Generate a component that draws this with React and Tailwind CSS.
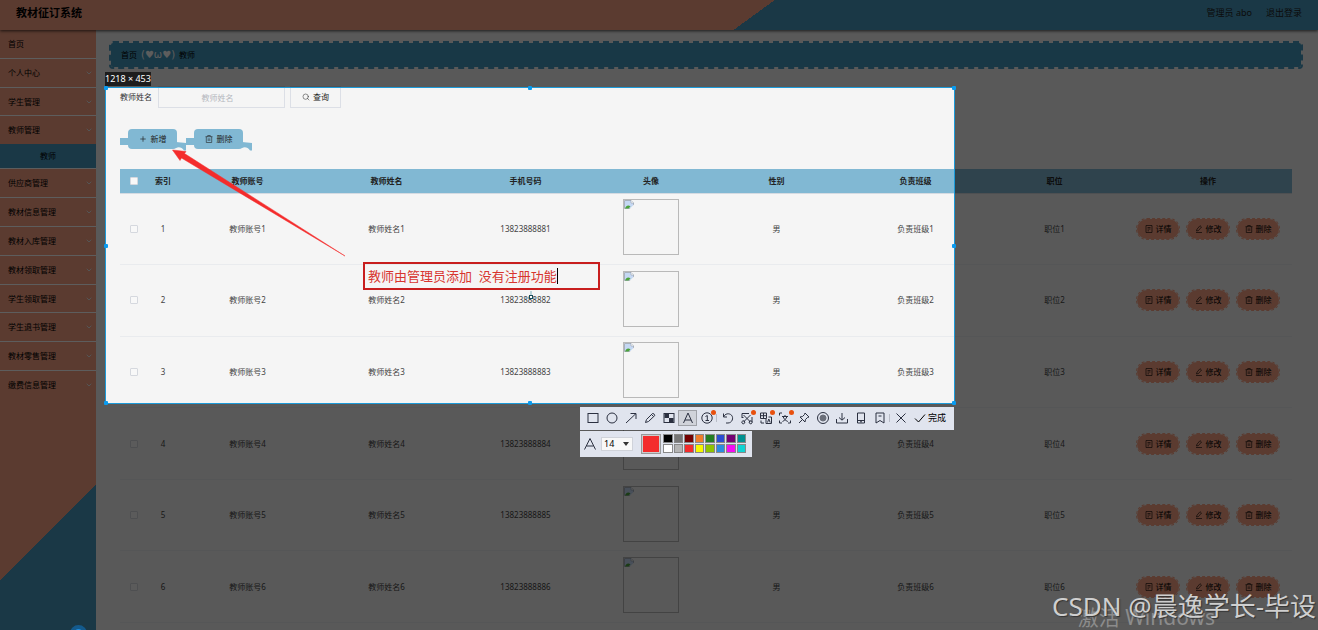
import { useState } from 'react';
import { ChevronDown, Search, Plus } from 'lucide-react';

const menus = [
  { name: '首页' },
  { name: '个人中心', arrow: true },
  { name: '学生管理', arrow: true },
  { name: '教师管理', arrow: true, child: '教师' },
  { name: '供应商管理', arrow: true },
  { name: '教材信息管理', arrow: true },
  { name: '教材入库管理', arrow: true },
  { name: '教材领取管理', arrow: true },
  { name: '学生领取管理', arrow: true },
  { name: '学生退书管理', arrow: true },
  { name: '教材零售管理', arrow: true },
  { name: '缴费信息管理', arrow: true },
];

const teachers = [1, 2, 3, 4, 5, 6].map((n) => ({
  id: n,
  account: `教师账号${n}`,
  name: `教师姓名${n}`,
  phone: `1382388888${n}`,
  sex: '男',
  grade: `负责班级${n}`,
  job: `职位${n}`,
}));

const swatches = [
  'bg-black', 'bg-[#767676]', 'bg-[#740000]', 'bg-[#ee7d2b]', 'bg-[#237d23]', 'bg-[#2a4dd0]', 'bg-[#740074]', 'bg-[#009090]',
  'bg-white', 'bg-[#b4b4b4]', 'bg-[#f42c2c]', 'bg-[#f7f700]', 'bg-[#8fc400]', 'bg-[#2b8be0]', 'bg-[#f20df2]', 'bg-[#0fd3d3]',
];

const handles = [
  'left-0 top-0', 'left-1/2 top-0', 'left-full top-0',
  'left-0 top-1/2', 'left-full top-1/2',
  'left-0 top-full', 'left-1/2 top-full', 'left-full top-full',
];

function DocIcon({ className }) {
  return (
    <svg viewBox="0 0 8 8" className={className} fill="none" stroke="currentColor" strokeWidth=".6">
      <path d="M1 .5H7V7.500H1ZM2.500 2.500H5.500M2.500 4H5.500M2.500 5.800H4" />
    </svg>
  );
}

function EditIcon({ className }) {
  return (
    <svg viewBox="0 0 8 8" className={className} fill="none" stroke="currentColor" strokeWidth=".6">
      <path d="M1.500 6L2 4.200L5 .7L6.500 2L3.500 5.500L1.500 6M1 7.500H7" />
    </svg>
  );
}

function BinIcon({ className }) {
  return (
    <svg viewBox="0 0 8 8" className={className} fill="none" stroke="currentColor" strokeWidth=".6">
      <path d="M.5 1.700H7.500M2.700 1.700V.5H5.300V1.700M1.300 1.700V7.500H6.700V1.700M3.200 3.300V6M4.800 3.300V6" />
    </svg>
  );
}

function Header() {
  return (
    <header className="relative z-10 flex h-[30px] shrink-0 items-center justify-between bg-[linear-gradient(144deg,#f8a284_57%,#489ac1_57%)] px-4 pb-1 shadow-[0_1px_3px_rgba(0,0,0,0.7)]">
      <h1 className="text-[11px] font-bold text-black">教材征订系统</h1>
      <div className="flex gap-3.5 text-[9px] text-[#222]">
        <span>管理员 abo</span>
        <a href="#logout">退出登录</a>
      </div>
    </header>
  );
}

function Sidebar() {
  return (
    <aside className="w-24 shrink-0 bg-[linear-gradient(135deg,#f8a284_389px,#489ac1_389px)]">
      <nav className="flex h-[369px] flex-col">
        {menus.map((item, i) => (
          <div key={item.name} className="contents">
            <a
              href="#menu"
              className={`flex flex-1 items-center justify-between pl-2 pr-[3px] ${i < menus.length - 1 && !item.child ? 'border-b border-white' : ''}`}
            >
              <span>{item.name}</span>
              {item.arrow && <ChevronDown className="size-2 text-[#e8e8e8]" strokeWidth={3} />}
            </a>
            {item.child && (
              <a href="#teacher" className="flex h-[25px] items-center justify-center border-b border-white bg-[#489ac1]">
                {item.child}
              </a>
            )}
          </div>
        ))}
      </nav>
    </aside>
  );
}

function RibbonButton({ icon: Icon, children }) {
  return (
    <div className="flex">
      <svg className="h-6 w-2" viewBox="0 0 8 24">
        <path d="M0 9H8V16H0Z" fill="#81b8d3" />
      </svg>
      <button className="flex h-5 w-[49px] items-center justify-center gap-1 rounded bg-[#81b8d3] text-[#222]">
        <Icon className="size-2" />
        {children}
      </button>
      <svg className="-ml-px h-6 w-2.5" viewBox="0 0 10 24">
        <path d="M0 13L10 14V21.500H8C6 18.500 3 17.500 0 19Z" fill="#81b8d3" />
      </svg>
    </div>
  );
}

function BrokenImage() {
  return (
    <div className="mx-auto size-14 border border-[#b9b9b9]">
      <svg viewBox="0 0 10 10" className="size-2.5">
        <path d="M.5 .5H7L9.500 3V8.500H.5Z" fill="#c5d8f3" stroke="#9aa3ad" strokeWidth=".8" />
        <path d="M7 .5V3H9.500" fill="#fff" stroke="#9aa3ad" strokeWidth=".6" />
        <path d="M1 8.500C2 5.500 4.500 4.500 6.500 6.500L4.500 8.500Z" fill="#4ba33b" />
        <path d="M5 9.500L10 4.500V9.500Z" fill="#f5f5f5" />
      </svg>
    </div>
  );
}

function RowAction({ icon: Icon, children }) {
  return (
    <button className="flex h-[22px] w-11 items-center justify-center gap-[3px] rounded-full border border-dashed border-[#f8a284] bg-[#f8a284] bg-clip-padding text-black">
      <Icon className="size-2" />
      {children}
    </button>
  );
}

function Checkbox({ label }) {
  return (
    <input
      type="checkbox"
      aria-label={label}
      className="mx-auto block size-2 appearance-none rounded-[1px] border border-[#d5d8de] bg-[#f8f8f8]"
    />
  );
}

function TeacherTable() {
  return (
    <table className="mt-5 h-[454px] w-full table-fixed border-collapse text-center text-[#444]">
      <colgroup>
        <col className="w-7" />
        <col className="w-[30px]" />
        <col />
        <col />
        <col />
        <col className="w-28" />
        <col />
        <col />
        <col />
        <col className="w-[168px]" />
      </colgroup>
      <thead>
        <tr className="h-6 border-b border-[#d5dbe2] bg-[#81b8d3] text-[#222]">
          <th><Checkbox label="全选" /></th>
          <th>索引</th>
          <th>教师账号</th>
          <th>教师姓名</th>
          <th>手机号码</th>
          <th>头像</th>
          <th>性别</th>
          <th>负责班级</th>
          <th>职位</th>
          <th>操作</th>
        </tr>
      </thead>
      <tbody>
        {teachers.map((t) => (
          <tr key={t.id} className="border-b border-[#e9ebee]">
            <td><Checkbox label={t.name} /></td>
            <td>{t.id}</td>
            <td>{t.account}</td>
            <td>{t.name}</td>
            <td>{t.phone}</td>
            <td className="pb-2 pt-[5px]"><BrokenImage /></td>
            <td>{t.sex}</td>
            <td>{t.grade}</td>
            <td>{t.job}</td>
            <td>
              <div className="flex justify-center gap-1.5">
                <RowAction icon={DocIcon}>详情</RowAction>
                <RowAction icon={EditIcon}>修改</RowAction>
                <RowAction icon={BinIcon}>删除</RowAction>
              </div>
            </td>
          </tr>
        ))}
      </tbody>
    </table>
  );
}

function Content() {
  return (
    <main className="min-w-0 flex-1 overflow-hidden bg-[#f5f5f5] pl-[13px] pr-[15px] pt-[11px]">
      <div className="flex h-7 items-center gap-1 rounded border-2 border-dashed border-[#489ac1] bg-[#439abf] bg-clip-padding pl-2.5 text-black">
        <a href="#home">首页</a>
        <span className="font-['DejaVu_Sans'] text-[10px] text-white">(♥ω♥)</span>
        <span>教师</span>
      </div>
      <div className="px-[11px] pt-[17px]">
        <form className="flex items-center" onSubmit={(e) => e.preventDefault()}>
          <label htmlFor="teacher" className="text-[#333]">教师姓名</label>
          <input
            id="teacher"
            placeholder="教师姓名"
            className="ml-1.5 h-[22px] w-[127px] border border-[#dcdfe6] pr-2 text-center placeholder:text-[#b4b7be]"
          />
          <button className="ml-[5px] flex h-[22px] w-[51px] items-center justify-center gap-[3px] border border-[#dcdfe6] text-[#222]">
            <Search className="size-2" strokeWidth={1.5} />
            查询
          </button>
        </form>
        <div className="mt-[21px] flex h-5">
          <RibbonButton icon={Plus}>新增</RibbonButton>
          <RibbonButton icon={BinIcon}>删除</RibbonButton>
        </div>
        <TeacherTable />
      </div>
    </main>
  );
}

// one entry per tool, drawn on a 14x14 grid
const tools = [
  { name: '矩形', art: <rect x="2" y="2.500" width="10" height="9" /> },
  { name: '椭圆', art: <circle cx="7" cy="7" r="5" /> },
  { name: '箭头', art: <path d="M2 12L12 2.500M6.500 2.500H12V8" /> },
  { name: '画笔', art: <path d="M2.500 11.500L3.500 8.500L9.500 2.500Q11 2 11.800 4.500L5.500 10.500ZM8.500 3.500L10.500 5.500" /> },
  { name: '马赛克', art: <><rect x="2" y="2.500" width="10" height="9" /><path d="M2.500 3H7V7H2.500ZM7 7H11.500V11H7Z" fill="#2b3040" stroke="none" /></> },
  { name: '文字', active: true, art: <path d="M2.500 12L7 2L11.500 12M4 9H10" /> },
  { name: '序号', dot: true, art: <><circle cx="7" cy="7" r="5.200" /><path d="M5.500 5.500L7.300 4.500V9.500M5.500 9.500H9" /></> },
  { sep: true },
  { name: '撤销', art: <path d="M2.500 2.500V6H6M2.500 6C4 2.500 8 1.800 10.500 4.200C13 7 11 12 7 12H5" /> },
  { name: '裁剪', dot: true, art: <path d="M2 6V2.500H9M12 6V11M3.500 4L10 10.500M10.500 4L4 10.500M1.500 6.500H3.500M2 12A1.500 1.500 0 1 1 4.800 11A1.500 1.500 0 0 1 2 12M9.200 11A1.500 1.500 0 1 1 12 12A1.500 1.500 0 0 1 9.200 11" /> },
  { name: '翻译', dot: true, art: <path d="M1.500 2H7.500V7.500H1.500ZM1.500 4.700H7.500M4.500 2V7.500M7 8V12.500H12.500V6H9.500M8.500 11.500L9.800 8L11.200 11.500M2 9.500V12H5" /> },
  { name: '文字识别', dot: true, art: <path d="M1.500 4.500V2H4M1.500 9.500V12H4M12.500 9.500V12H10M4 5.500H10M7 4V5.500M9 5.500C8 8 6.500 9.500 4.500 10.500M5 5.500C6 8 7.500 9.500 9.800 10.500" /> },
  { name: '钉住', art: <path d="M8 2L12 6L10.500 6.500L8.500 8.500L8 11L3 6L5.500 5.500L7.500 3.500ZM5.500 8.500L2 12" /> },
  { name: '录屏', art: <><circle cx="7" cy="7" r="5.500" /><circle cx="7" cy="7" r="3" fill="#6b6f7a" stroke="#6b6f7a" /></> },
  { name: '保存', art: <path d="M7 2V9M4 6.500L7 9.200L10 6.500M1.500 8V12H12.500V8" /> },
  { name: '手机', art: <path d="M3.500 2H10.500V12H3.500ZM3.500 9.500H10.500M6 10.800H8" /> },
  { name: '收藏', art: <path d="M3 2H11V12L7 9.500L3 12ZM5.500 5H8.500" /> },
  { sep: true },
  { name: '取消', art: <path d="M2.500 2.500L11.500 11.500M11.500 2.500L2.500 11.500" /> },
];

function CaptureTools() {
  const [size, setSize] = useState('14');
  return (
    <div className="absolute left-[580px] top-[407px] text-[#2b3040]">
      <div className="flex h-[23px] w-[374px] items-center bg-[#e0e4ee] pb-px pl-[3px]">
        {tools.map((tool, i) =>
          tool.sep ? (
            <span key={i} className="mr-px h-2 w-px bg-[#b9bdc8]" />
          ) : (
            <button
              key={i}
              aria-label={tool.name}
              className={`relative flex h-4 w-[19px] items-center justify-center ${tool.active ? 'bg-[#d0d3da] outline outline-1 -outline-offset-1 outline-[#9fa2a8]' : ''}`}
            >
              <svg viewBox="0 0 14 14" className="size-3.5" fill="none" stroke="currentColor" strokeWidth="1">
                {tool.art}
              </svg>
              {tool.dot && <i className="absolute right-0 top-0 size-[5px] rounded-full bg-[#e8500e]" />}
            </button>
          ),
        )}
        <button className="flex items-center gap-0.5 pl-1 text-[9px] text-black">
          <svg viewBox="0 0 12 12" className="size-3" fill="none" stroke="currentColor">
            <path d="M1 6.500L4.500 10L11 2.500" />
          </svg>
          完成
        </button>
      </div>
      <div className="mt-px flex h-[26px] w-[172px] items-center bg-[#e0e4ee] pb-px pl-[3px]">
        <svg viewBox="0 0 14 14" className="size-3.5" fill="none" stroke="currentColor">
          <path d="M1.500 12.500L7 1.500L12.500 12.500M3.500 9H10.500" />
        </svg>
        <div className="relative ml-1">
          <select
            aria-label="字号"
            value={size}
            onChange={(e) => setSize(e.target.value)}
            className="block h-3.5 w-8 appearance-none border border-[#d0d3da] bg-[#f8f8f8] pl-0.5 text-[9px] leading-3 text-black"
          >
            <option>12</option>
            <option>14</option>
            <option>16</option>
          </select>
          <svg viewBox="0 0 6 4" className="pointer-events-none absolute right-1 top-[5px] h-1 w-1.5">
            <path d="M0 0H6L3 4Z" fill="#333" />
          </svg>
        </div>
        <button aria-label="当前颜色" className="ml-2 size-5 border border-[#999] bg-[#f42c2c] ring-1 ring-inset ring-[#ccc]" />
        <div className="ml-0.5 grid w-[83px] grid-cols-8 gap-px">
          {swatches.map((color) => (
            <button key={color} aria-label="颜色" className={`h-[9px] border border-[#888] ${color}`} />
          ))}
        </div>
      </div>
    </div>
  );
}

function CaptureOverlay() {
  return (
    <div className="absolute inset-0 z-20 overflow-hidden">
      <div className="absolute left-[105px] top-[87px] h-[317px] w-[850px] border border-[#1c9ad8] shadow-[0_0_0_3000px_rgba(0,0,0,0.637)]">
        {handles.map((pos) => (
          <i key={pos} className={`absolute size-1 -translate-x-1/2 -translate-y-1/2 rounded-[1px] bg-[#0a9bf0] ${pos}`} />
        ))}
      </div>
      <div className="absolute left-[105px] top-[72px] h-3.5 whitespace-nowrap bg-[#1d1d1d] text-[9px] leading-[14px] text-white">
        1218 × 453
      </div>

      <svg className="absolute left-[170px] top-[148px] h-[110px] w-[178px]" viewBox="170 148 178 110">
        <path d="M172.500 150L186 151.500L184.500 153.500L345 256L181.500 158L180 160.500Z" fill="#f42c2c" stroke="#f42c2c" strokeWidth=".5" />
      </svg>

      <div className="absolute left-[363px] top-[262px] flex h-7 w-[237px] items-center border-2 border-[#c81e1e] pl-[3px]">
        <input
          aria-label="标注文字"
          defaultValue="教师由管理员添加  没有注册功能"
          className="field-sizing-content h-5 text-[13px] leading-5 text-[#d8352f] outline-none"
        />
        <i className="h-4 w-px bg-black" />
      </div>

      <svg className="absolute left-[525px] top-[291px] size-3" viewBox="0 0 12 12">
        <path d="M6 0V6M0 7H12" stroke="#7fb0bd" />
        <rect x="4.500" y="4.500" width="3" height="3" fill="#fff" stroke="#174a5a" />
      </svg>

      <CaptureTools />

      <i className="absolute -bottom-3 left-[70px] size-[17px] rounded-full border-4 border-[#145a8c] bg-[#1f8fe0]" />
      <p className="absolute bottom-0 right-[103px] whitespace-nowrap text-[21px] leading-[26px] text-[#8c8c8c]">激活 Windows</p>
      <p className="absolute bottom-2 right-0.5 whitespace-nowrap text-[26px] leading-8 text-[#cfcfcf] [text-shadow:1px_1px_1px_#333]">
        CSDN @晨逸学长-毕设
      </p>
    </div>
  );
}

export default function App() {
  return (
    <div className="relative flex h-screen flex-col overflow-hidden bg-[#f5f5f5] font-['Noto_Sans','Noto_Sans_CJK_SC',sans-serif] text-[8px] leading-3 text-black">
      <Header />
      <div className="flex min-h-0 flex-1">
        <Sidebar />
        <Content />
      </div>
      <CaptureOverlay />
    </div>
  );
}
